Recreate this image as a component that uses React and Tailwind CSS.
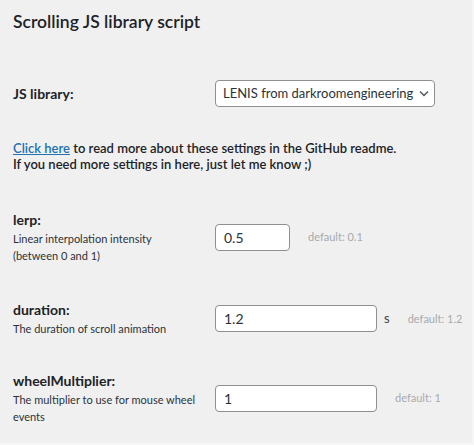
import React from 'react';

const Row = ({ label, desc, children, className = '' }) => (
  <div className={`flex items-center ${className}`}>
    <div className="w-[202px] shrink-0 pr-2">
      <div className="text-[14px] leading-[20px] font-bold">{label}</div>
      {desc && <div className="text-[11px] leading-[17px] text-[#2c3338]">{desc}</div>}
    </div>
    <div className="flex items-center whitespace-nowrap">{children}</div>
  </div>
);

const TextInput = ({ value, wide }) => (
  <input
    defaultValue={value}
    className={`${wide ? 'w-[162px]' : 'w-[75px]'} h-[27px] rounded-[4px] border border-[#8c8f94] bg-white px-2 text-[14px] text-[#2c3338] outline-none`}
  />
);

const Hint = ({ children }) => (
  <span className="ml-[18px] text-[11px] text-[#a7aaad]">{children}</span>
);

export default function App() {
  return (
    <div
      className="w-[474px] h-[445px] bg-[#f0f0f1] border-r-2 border-b-2 border-[#f6f6f7] px-[13px] pt-[10px] text-[#1d2327] overflow-hidden"
      style={{ fontFamily: 'Lato, "Liberation Sans", sans-serif' }}
    >
      <h2 className="text-[17.5px] leading-[24px] font-semibold">Scrolling JS library script</h2>

      {/* library select */}
      <Row label="JS library:" className="mt-[46px]">
        <div className="relative">
          <select className="appearance-none w-[220px] h-[27px] rounded-[4px] border border-[#8c8f94] bg-white pl-[7px] pr-[14px] text-[13px] text-[#2c3338] outline-none">
            <option>LENIS from darkroomengineering</option>
          </select>
          <svg className="pointer-events-none absolute right-[6px] top-[10px]" width="10" height="7" viewBox="0 0 10 7" fill="none">
            <path d="M1 1.5l4 4 4-4" stroke="#50575e" strokeWidth="1.5" />
          </svg>
        </div>
      </Row>

      <p className="mt-[33px] text-[13px] leading-[16px] font-semibold">
        <a href="#" className="text-[#2271b1] underline">Click here</a> to read more about these settings in the GitHub readme.
        <br />
        If you need more settings in here, just let me know ;)
      </p>

      <Row label="lerp:" desc={<>Linear interpolation intensity<br />(between 0 and 1)</>} className="mt-[38px]">
        <TextInput value="0.5" />
        <Hint>default: 0.1</Hint>
      </Row>

      <Row label="duration:" desc="The duration of scroll animation" className="mt-[36px]">
        <TextInput value="1.2" wide />
        <span className="ml-[7px] text-[13px] text-[#3c434a]">s</span>
        <Hint>default: 1.2</Hint>
      </Row>

      <Row label="wheelMultiplier:" desc="The multiplier to use for mouse wheel events" className="mt-[34px]">
        <TextInput value="1" wide />
        <Hint>default: 1</Hint>
      </Row>
    </div>
  );
}
